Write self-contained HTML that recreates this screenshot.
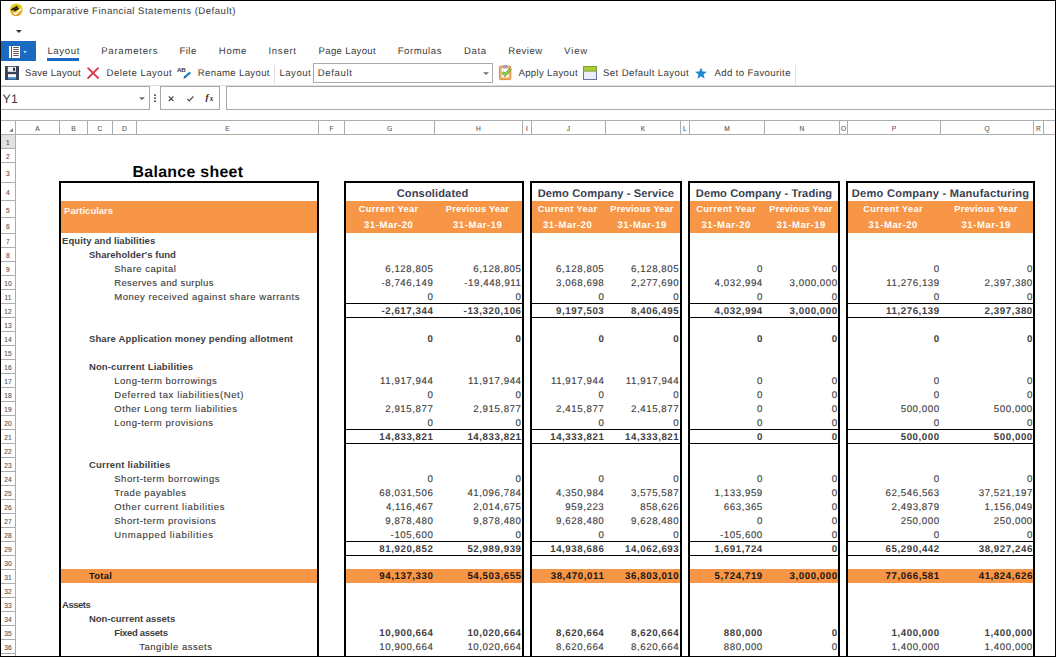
<!DOCTYPE html>
<html><head><meta charset="utf-8"><title>Comparative Financial Statements (Default)</title>
<style>
html,body{margin:0;padding:0}
body{width:1056px;height:657px;position:relative;overflow:hidden;background:#fff;font-family:"Liberation Sans", sans-serif}
.t{position:absolute;white-space:pre;line-height:14px;height:14px}
svg{position:absolute;overflow:visible}
</style></head>
<body>
<div style="position:absolute;left:0px;top:0px;width:1056px;height:1px;background:#000;"></div>
<div style="position:absolute;left:0px;top:0px;width:1px;height:657px;background:#000;"></div>
<div style="position:absolute;left:1055px;top:0px;width:1px;height:657px;background:#000;"></div>
<div style="position:absolute;left:0px;top:656px;width:1056px;height:1px;background:#000;"></div>
<div style="position:absolute;left:1px;top:41px;width:35px;height:20px;background:#1a6bbf;"></div>
<div style="position:absolute;left:47px;top:58px;width:32px;height:3px;background:#1a6bbf;"></div>
<div style="position:absolute;left:274px;top:65px;width:1px;height:20px;background:#e2e2e2;"></div>
<div style="position:absolute;left:795px;top:65px;width:1px;height:20px;background:#e2e2e2;"></div>
<div style="position:absolute;left:313px;top:63px;width:180px;height:20px;background:#fff;box-sizing:border-box;border:1px solid #ababab"></div>
<div style="position:absolute;left:1px;top:85px;width:1054px;height:1px;background:#dedede;"></div>
<div style="position:absolute;left:1px;top:86px;width:149px;height:1px;background:#a8a8a8;"></div>
<div style="position:absolute;left:1px;top:109px;width:149px;height:1px;background:#a8a8a8;"></div>
<div style="position:absolute;left:149px;top:86px;width:1px;height:24px;background:#a8a8a8;"></div>
<div style="position:absolute;left:160px;top:86px;width:60px;height:1px;background:#a8a8a8;"></div>
<div style="position:absolute;left:160px;top:109px;width:60px;height:1px;background:#a8a8a8;"></div>
<div style="position:absolute;left:160px;top:86px;width:1px;height:24px;background:#a8a8a8;"></div>
<div style="position:absolute;left:219px;top:86px;width:1px;height:24px;background:#a8a8a8;"></div>
<div style="position:absolute;left:226px;top:86px;width:829px;height:1px;background:#a8a8a8;"></div>
<div style="position:absolute;left:226px;top:109px;width:829px;height:1px;background:#a8a8a8;"></div>
<div style="position:absolute;left:226px;top:86px;width:1px;height:24px;background:#a8a8a8;"></div>
<div style="position:absolute;left:1px;top:120px;width:1054px;height:1px;background:#adadad;"></div>
<div style="position:absolute;left:1px;top:134px;width:1054px;height:1px;background:#adadad;"></div>
<div style="position:absolute;left:15px;top:121px;width:1px;height:13px;background:#adadad;"></div>
<div style="position:absolute;left:59px;top:121px;width:1px;height:13px;background:#adadad;"></div>
<div style="position:absolute;left:87px;top:121px;width:1px;height:13px;background:#adadad;"></div>
<div style="position:absolute;left:112px;top:121px;width:1px;height:13px;background:#adadad;"></div>
<div style="position:absolute;left:136px;top:121px;width:1px;height:13px;background:#adadad;"></div>
<div style="position:absolute;left:318px;top:121px;width:1px;height:13px;background:#adadad;"></div>
<div style="position:absolute;left:344px;top:121px;width:1px;height:13px;background:#adadad;"></div>
<div style="position:absolute;left:434px;top:121px;width:1px;height:13px;background:#adadad;"></div>
<div style="position:absolute;left:522px;top:121px;width:1px;height:13px;background:#adadad;"></div>
<div style="position:absolute;left:531px;top:121px;width:1px;height:13px;background:#adadad;"></div>
<div style="position:absolute;left:605px;top:121px;width:1px;height:13px;background:#adadad;"></div>
<div style="position:absolute;left:680px;top:121px;width:1px;height:13px;background:#adadad;"></div>
<div style="position:absolute;left:689px;top:121px;width:1px;height:13px;background:#adadad;"></div>
<div style="position:absolute;left:764px;top:121px;width:1px;height:13px;background:#adadad;"></div>
<div style="position:absolute;left:839px;top:121px;width:1px;height:13px;background:#adadad;"></div>
<div style="position:absolute;left:847px;top:121px;width:1px;height:13px;background:#adadad;"></div>
<div style="position:absolute;left:940px;top:121px;width:1px;height:13px;background:#adadad;"></div>
<div style="position:absolute;left:1033px;top:121px;width:1px;height:13px;background:#adadad;"></div>
<div style="position:absolute;left:1043px;top:121px;width:1px;height:13px;background:#adadad;"></div>
<div style="position:absolute;left:15px;top:135px;width:1px;height:521px;background:#adadad;"></div>
<div style="position:absolute;left:1px;top:135px;width:14px;height:13px;background:#e2e2e2;"></div>
<div style="position:absolute;left:1px;top:148px;width:15px;height:1px;background:#adadad;"></div>
<div style="position:absolute;left:1px;top:162px;width:15px;height:1px;background:#adadad;"></div>
<div style="position:absolute;left:1px;top:182px;width:15px;height:1px;background:#adadad;"></div>
<div style="position:absolute;left:1px;top:200px;width:15px;height:1px;background:#adadad;"></div>
<div style="position:absolute;left:1px;top:217px;width:15px;height:1px;background:#adadad;"></div>
<div style="position:absolute;left:1px;top:233px;width:15px;height:1px;background:#adadad;"></div>
<div style="position:absolute;left:1px;top:247px;width:15px;height:1px;background:#adadad;"></div>
<div style="position:absolute;left:1px;top:261px;width:15px;height:1px;background:#adadad;"></div>
<div style="position:absolute;left:1px;top:275px;width:15px;height:1px;background:#adadad;"></div>
<div style="position:absolute;left:1px;top:289px;width:15px;height:1px;background:#adadad;"></div>
<div style="position:absolute;left:1px;top:303px;width:15px;height:1px;background:#adadad;"></div>
<div style="position:absolute;left:1px;top:317px;width:15px;height:1px;background:#adadad;"></div>
<div style="position:absolute;left:1px;top:331px;width:15px;height:1px;background:#adadad;"></div>
<div style="position:absolute;left:1px;top:345px;width:15px;height:1px;background:#adadad;"></div>
<div style="position:absolute;left:1px;top:359px;width:15px;height:1px;background:#adadad;"></div>
<div style="position:absolute;left:1px;top:373px;width:15px;height:1px;background:#adadad;"></div>
<div style="position:absolute;left:1px;top:387px;width:15px;height:1px;background:#adadad;"></div>
<div style="position:absolute;left:1px;top:401px;width:15px;height:1px;background:#adadad;"></div>
<div style="position:absolute;left:1px;top:415px;width:15px;height:1px;background:#adadad;"></div>
<div style="position:absolute;left:1px;top:429px;width:15px;height:1px;background:#adadad;"></div>
<div style="position:absolute;left:1px;top:443px;width:15px;height:1px;background:#adadad;"></div>
<div style="position:absolute;left:1px;top:457px;width:15px;height:1px;background:#adadad;"></div>
<div style="position:absolute;left:1px;top:471px;width:15px;height:1px;background:#adadad;"></div>
<div style="position:absolute;left:1px;top:485px;width:15px;height:1px;background:#adadad;"></div>
<div style="position:absolute;left:1px;top:499px;width:15px;height:1px;background:#adadad;"></div>
<div style="position:absolute;left:1px;top:513px;width:15px;height:1px;background:#adadad;"></div>
<div style="position:absolute;left:1px;top:527px;width:15px;height:1px;background:#adadad;"></div>
<div style="position:absolute;left:1px;top:541px;width:15px;height:1px;background:#adadad;"></div>
<div style="position:absolute;left:1px;top:555px;width:15px;height:1px;background:#adadad;"></div>
<div style="position:absolute;left:1px;top:569px;width:15px;height:1px;background:#adadad;"></div>
<div style="position:absolute;left:1px;top:583px;width:15px;height:1px;background:#adadad;"></div>
<div style="position:absolute;left:1px;top:597px;width:15px;height:1px;background:#adadad;"></div>
<div style="position:absolute;left:1px;top:611px;width:15px;height:1px;background:#adadad;"></div>
<div style="position:absolute;left:1px;top:625px;width:15px;height:1px;background:#adadad;"></div>
<div style="position:absolute;left:1px;top:639px;width:15px;height:1px;background:#adadad;"></div>
<div style="position:absolute;left:1px;top:653px;width:15px;height:1px;background:#adadad;"></div>
<div style="position:absolute;left:61px;top:201px;width:256px;height:32px;background:#f79646;"></div>
<div style="position:absolute;left:61px;top:569px;width:256px;height:14px;background:#f79646;"></div>
<div style="position:absolute;left:346px;top:201px;width:176px;height:32px;background:#f79646;"></div>
<div style="position:absolute;left:346px;top:569px;width:176px;height:14px;background:#f79646;"></div>
<div style="position:absolute;left:532px;top:201px;width:148px;height:32px;background:#f79646;"></div>
<div style="position:absolute;left:532px;top:569px;width:148px;height:14px;background:#f79646;"></div>
<div style="position:absolute;left:690px;top:201px;width:148px;height:32px;background:#f79646;"></div>
<div style="position:absolute;left:690px;top:569px;width:148px;height:14px;background:#f79646;"></div>
<div style="position:absolute;left:848px;top:201px;width:185px;height:32px;background:#f79646;"></div>
<div style="position:absolute;left:848px;top:569px;width:185px;height:14px;background:#f79646;"></div>
<div style="position:absolute;left:346px;top:303px;width:176px;height:1px;background:#000;"></div>
<div style="position:absolute;left:346px;top:317px;width:176px;height:1px;background:#000;"></div>
<div style="position:absolute;left:346px;top:429px;width:176px;height:1px;background:#000;"></div>
<div style="position:absolute;left:346px;top:443px;width:176px;height:1px;background:#000;"></div>
<div style="position:absolute;left:346px;top:541px;width:176px;height:1px;background:#000;"></div>
<div style="position:absolute;left:346px;top:555px;width:176px;height:1px;background:#000;"></div>
<div style="position:absolute;left:532px;top:303px;width:148px;height:1px;background:#000;"></div>
<div style="position:absolute;left:532px;top:317px;width:148px;height:1px;background:#000;"></div>
<div style="position:absolute;left:532px;top:429px;width:148px;height:1px;background:#000;"></div>
<div style="position:absolute;left:532px;top:443px;width:148px;height:1px;background:#000;"></div>
<div style="position:absolute;left:532px;top:541px;width:148px;height:1px;background:#000;"></div>
<div style="position:absolute;left:532px;top:555px;width:148px;height:1px;background:#000;"></div>
<div style="position:absolute;left:690px;top:303px;width:148px;height:1px;background:#000;"></div>
<div style="position:absolute;left:690px;top:317px;width:148px;height:1px;background:#000;"></div>
<div style="position:absolute;left:690px;top:429px;width:148px;height:1px;background:#000;"></div>
<div style="position:absolute;left:690px;top:443px;width:148px;height:1px;background:#000;"></div>
<div style="position:absolute;left:690px;top:541px;width:148px;height:1px;background:#000;"></div>
<div style="position:absolute;left:690px;top:555px;width:148px;height:1px;background:#000;"></div>
<div style="position:absolute;left:848px;top:303px;width:185px;height:1px;background:#000;"></div>
<div style="position:absolute;left:848px;top:317px;width:185px;height:1px;background:#000;"></div>
<div style="position:absolute;left:848px;top:429px;width:185px;height:1px;background:#000;"></div>
<div style="position:absolute;left:848px;top:443px;width:185px;height:1px;background:#000;"></div>
<div style="position:absolute;left:848px;top:541px;width:185px;height:1px;background:#000;"></div>
<div style="position:absolute;left:848px;top:555px;width:185px;height:1px;background:#000;"></div>
<div style="position:absolute;left:59px;top:181px;width:260px;height:2px;background:#000;"></div>
<div style="position:absolute;left:59px;top:181px;width:2px;height:475px;background:#000;"></div>
<div style="position:absolute;left:317px;top:181px;width:2px;height:475px;background:#000;"></div>
<div style="position:absolute;left:344px;top:181px;width:180px;height:2px;background:#000;"></div>
<div style="position:absolute;left:344px;top:181px;width:2px;height:475px;background:#000;"></div>
<div style="position:absolute;left:522px;top:181px;width:2px;height:475px;background:#000;"></div>
<div style="position:absolute;left:530px;top:181px;width:152px;height:2px;background:#000;"></div>
<div style="position:absolute;left:530px;top:181px;width:2px;height:475px;background:#000;"></div>
<div style="position:absolute;left:680px;top:181px;width:2px;height:475px;background:#000;"></div>
<div style="position:absolute;left:688px;top:181px;width:152px;height:2px;background:#000;"></div>
<div style="position:absolute;left:688px;top:181px;width:2px;height:475px;background:#000;"></div>
<div style="position:absolute;left:838px;top:181px;width:2px;height:475px;background:#000;"></div>
<div style="position:absolute;left:846px;top:181px;width:189px;height:2px;background:#000;"></div>
<div style="position:absolute;left:846px;top:181px;width:2px;height:475px;background:#000;"></div>
<div style="position:absolute;left:1033px;top:181px;width:2px;height:475px;background:#000;"></div>
<svg width="1056" height="657" viewBox="0 0 1056 657" style="left:0;top:0">
<defs>
<linearGradient id="gy" x1="0" y1="0" x2="0" y2="1"><stop offset="0" stop-color="#d6d321"/><stop offset="0.55" stop-color="#e9c41c"/><stop offset="1" stop-color="#e39a22"/></linearGradient>
<linearGradient id="gb" x1="0" y1="0" x2="0" y2="1"><stop offset="0" stop-color="#ffffff"/><stop offset="0.45" stop-color="#eef4fb"/><stop offset="0.55" stop-color="#5b9bd8"/><stop offset="1" stop-color="#3f86cc"/></linearGradient>
</defs>
<!-- app icon -->
<circle cx="16.3" cy="9.8" r="6.4" fill="url(#gy)"/>
<path d="M17.6 6.6 L11.4 10.0 M18.6 8.2 L14.0 10.8" stroke="#1e1000" stroke-width="1.7" fill="none"/>
<path d="M13.6 12.6 L15.6 14.2 L21 9.0" stroke="#fff" stroke-width="1.5" fill="none"/>
<!-- quick access arrow -->
<path d="M15.9 30 L21.9 30 L18.9 33 Z" fill="#333"/>
<!-- app button glyph -->
<rect x="9" y="46" width="2" height="12" fill="#fff"/>
<rect x="12" y="46" width="8" height="12" fill="#fff"/>
<path d="M13.2 47.5H18.8M13.2 49.5H18.8M13.2 51.5H18.8M13.2 53.5H18.8M13.2 55.5H18.8" stroke="#6d5a48" stroke-width="1"/>
<path d="M23.4 51 L26.6 51 L25 53.2 Z" fill="#dfeefc"/>
<!-- save -->
<rect x="5" y="66" width="14" height="14" fill="#3a4257"/>
<rect x="7.8" y="66.8" width="8.2" height="5" fill="#f4f6fa"/>
<rect x="13" y="67.8" width="2.1" height="3" fill="#262d3d"/>
<rect x="8" y="74.2" width="8" height="5.2" fill="url(#gb)"/>
<!-- delete X -->
<path d="M88.1 68.2 L98.1 78 M98.1 68.2 L88.1 78" stroke="#e0354f" stroke-width="1.8" stroke-linecap="round" fill="none"/>
<!-- rename -->
<text x="176.9" y="72.2" font-family="Liberation Sans, sans-serif" font-size="6.2" font-weight="700" fill="#333">AB</text>
<path d="M190.3 72.3 L184.6 77.3" stroke="#2a86c0" stroke-width="2.4" fill="none"/>
<path d="M184.9 76 L185.9 77.9 L183.1 78.7 Z" fill="#2c5f88"/>
<!-- combobox arrow -->
<path d="M483.1 72.2 L489 72.2 L486.05 75 Z" fill="#6e6e6e"/>
<!-- apply (clipboard) -->
<rect x="499.4" y="66.2" width="11.4" height="13.4" rx="1" fill="#f0b46a" stroke="#d98a3a" stroke-width="1"/>
<rect x="501.8" y="68.4" width="6.8" height="8.8" fill="#fff"/>
<rect x="502.7" y="65" width="4.8" height="3.3" rx="0.8" fill="#9aa1c4"/>
<path d="M502.6 72.1 L505.1 75 L510.6 68.9" stroke="#4f8f1e" stroke-width="2.7" fill="none"/>
<path d="M502.6 72.1 L505.1 75 L510.6 68.9" stroke="#a4dd55" stroke-width="1.3" fill="none"/>
<!-- set default -->
<rect x="583.5" y="66.5" width="13" height="13" fill="#eaeefa" stroke="#6a73a8" stroke-width="1"/>
<rect x="583.5" y="66.5" width="13" height="4.6" fill="#a9cd3e" stroke="#7f9f2c" stroke-width="1"/>
<!-- star -->
<path d="M701 67.5 L702.6 71.6 L706.9 71.8 L703.5 74.5 L704.7 78.7 L701 76.3 L697.3 78.7 L698.5 74.5 L695.1 71.8 L699.4 71.6 Z" fill="#1f86d0"/>
<!-- name box arrow, dots -->
<path d="M139.1 97.3 L144.9 97.3 L142 100.2 Z" fill="#6e6e6e"/>
<rect x="154" y="94.4" width="2" height="1.5" fill="#555"/><rect x="154" y="97.4" width="2" height="1.5" fill="#555"/><rect x="154" y="100.4" width="2" height="1.5" fill="#555"/>
<!-- cancel / enter / fx -->
<path d="M168.8 96.4 L173.4 101 M173.4 96.4 L168.8 101" stroke="#444" stroke-width="1.1" fill="none"/>
<path d="M187.4 98.9 L189.3 100.9 L193.4 96.3" stroke="#444" stroke-width="1.2" fill="none"/>
<text x="205.6" y="99.9" font-family="Liberation Serif, serif" font-size="9.2" font-style="italic" font-weight="700" fill="#222">f</text>
<text x="209.7" y="101.2" font-family="Liberation Serif, serif" font-size="7.2" font-style="italic" font-weight="700" fill="#222">x</text>
<!-- select all -->
<path d="M13 127.9 L13 131.8 L9.2 131.8 Z" fill="#777"/>
</svg>

<div class="t" style="left:29.2px;top:5px;font-size:9.6px;color:#3b3b3b;text-rendering:geometricPrecision;letter-spacing:0.49px;">Comparative Financial Statements (Default)</div>
<div class="t" style="left:47.4px;top:45px;font-size:9.6px;color:#3b3b3b;text-rendering:geometricPrecision;letter-spacing:0.63px;">Layout</div>
<div class="t" style="left:101.2px;top:45px;font-size:9.6px;color:#3b3b3b;text-rendering:geometricPrecision;letter-spacing:0.74px;">Parameters</div>
<div class="t" style="left:179.4px;top:45px;font-size:9.6px;color:#3b3b3b;text-rendering:geometricPrecision;letter-spacing:0.46px;">File</div>
<div class="t" style="left:218.8px;top:45px;font-size:9.6px;color:#3b3b3b;text-rendering:geometricPrecision;letter-spacing:0.69px;">Home</div>
<div class="t" style="left:268.4px;top:45px;font-size:9.6px;color:#3b3b3b;text-rendering:geometricPrecision;letter-spacing:0.73px;">Insert</div>
<div class="t" style="left:318.6px;top:45px;font-size:9.6px;color:#3b3b3b;text-rendering:geometricPrecision;letter-spacing:0.32px;">Page Layout</div>
<div class="t" style="left:397.7px;top:45px;font-size:9.6px;color:#3b3b3b;text-rendering:geometricPrecision;letter-spacing:0.54px;">Formulas</div>
<div class="t" style="left:463.9px;top:45px;font-size:9.6px;color:#3b3b3b;text-rendering:geometricPrecision;letter-spacing:0.66px;">Data</div>
<div class="t" style="left:508.3px;top:45px;font-size:9.6px;color:#3b3b3b;text-rendering:geometricPrecision;letter-spacing:0.48px;">Review</div>
<div class="t" style="left:564.1px;top:45px;font-size:9.6px;color:#3b3b3b;text-rendering:geometricPrecision;letter-spacing:0.84px;">View</div>
<div class="t" style="left:25.0px;top:67px;font-size:9.6px;color:#3b3b3b;text-rendering:geometricPrecision;letter-spacing:0.24px;">Save Layout</div>
<div class="t" style="left:106.5px;top:67px;font-size:9.6px;color:#3b3b3b;text-rendering:geometricPrecision;letter-spacing:0.5px;">Delete Layout</div>
<div class="t" style="left:197.8px;top:67px;font-size:9.6px;color:#3b3b3b;text-rendering:geometricPrecision;letter-spacing:0.33px;">Rename Layout</div>
<div class="t" style="left:279.5px;top:67px;font-size:9.6px;color:#3b3b3b;text-rendering:geometricPrecision;letter-spacing:0.47px;">Layout</div>
<div class="t" style="left:317.7px;top:67px;font-size:9.6px;color:#3b3b3b;text-rendering:geometricPrecision;letter-spacing:0.64px;">Default</div>
<div class="t" style="left:518.4px;top:67px;font-size:9.6px;color:#3b3b3b;text-rendering:geometricPrecision;letter-spacing:0.34px;">Apply Layout</div>
<div class="t" style="left:603.0px;top:67px;font-size:9.6px;color:#3b3b3b;text-rendering:geometricPrecision;letter-spacing:0.39px;">Set Default Layout</div>
<div class="t" style="left:714.4px;top:67px;font-size:9.6px;color:#3b3b3b;text-rendering:geometricPrecision;letter-spacing:0.38px;">Add to Favourite</div>
<div class="t" style="left:2.5px;top:92px;font-size:12.3px;color:#3a3a3a;text-rendering:geometricPrecision;letter-spacing:0.23px;">Y1</div>
<div class="t" style="left:35.2px;top:122px;font-size:6.6px;color:#585858;-webkit-text-stroke:0.12px;">A</div>
<div class="t" style="left:71.2px;top:122px;font-size:6.6px;color:#585858;-webkit-text-stroke:0.12px;">B</div>
<div class="t" style="left:97.6px;top:122px;font-size:6.6px;color:#585858;-webkit-text-stroke:0.12px;">C</div>
<div class="t" style="left:122.1px;top:122px;font-size:6.6px;color:#585858;-webkit-text-stroke:0.12px;">D</div>
<div class="t" style="left:225.2px;top:122px;font-size:6.6px;color:#585858;-webkit-text-stroke:0.12px;">E</div>
<div class="t" style="left:329.4px;top:122px;font-size:6.6px;color:#585858;-webkit-text-stroke:0.12px;">F</div>
<div class="t" style="left:386.9px;top:122px;font-size:6.6px;color:#585858;-webkit-text-stroke:0.12px;">G</div>
<div class="t" style="left:476.1px;top:122px;font-size:6.6px;color:#585858;-webkit-text-stroke:0.12px;">H</div>
<div class="t" style="left:526.0px;top:122px;font-size:6.6px;color:#585858;-webkit-text-stroke:0.12px;">I</div>
<div class="t" style="left:566.8px;top:122px;font-size:6.6px;color:#585858;-webkit-text-stroke:0.12px;">J</div>
<div class="t" style="left:640.7px;top:122px;font-size:6.6px;color:#585858;-webkit-text-stroke:0.12px;">K</div>
<div class="t" style="left:683.1px;top:122px;font-size:6.6px;color:#585858;-webkit-text-stroke:0.12px;">L</div>
<div class="t" style="left:724.2px;top:122px;font-size:6.6px;color:#585858;-webkit-text-stroke:0.12px;">M</div>
<div class="t" style="left:799.6px;top:122px;font-size:6.6px;color:#585858;-webkit-text-stroke:0.12px;">N</div>
<div class="t" style="left:840.9px;top:122px;font-size:6.6px;color:#585858;-webkit-text-stroke:0.12px;">O</div>
<div class="t" style="left:891.7px;top:122px;font-size:6.6px;color:#585858;-webkit-text-stroke:0.12px;">P</div>
<div class="t" style="left:984.4px;top:122px;font-size:6.6px;color:#585858;-webkit-text-stroke:0.12px;">Q</div>
<div class="t" style="left:1036.1px;top:122px;font-size:6.6px;color:#585858;-webkit-text-stroke:0.12px;">R</div>
<div class="t" style="left:6.1px;top:136px;font-size:6.6px;color:#585858;-webkit-text-stroke:0.12px;">1</div>
<div class="t" style="left:6.1px;top:150px;font-size:6.6px;color:#585858;-webkit-text-stroke:0.12px;">2</div>
<div class="t" style="left:6.1px;top:167px;font-size:6.6px;color:#585858;-webkit-text-stroke:0.12px;">3</div>
<div class="t" style="left:6.1px;top:186px;font-size:6.6px;color:#585858;-webkit-text-stroke:0.12px;">4</div>
<div class="t" style="left:6.1px;top:204px;font-size:6.6px;color:#585858;-webkit-text-stroke:0.12px;">5</div>
<div class="t" style="left:6.1px;top:220px;font-size:6.6px;color:#585858;-webkit-text-stroke:0.12px;">6</div>
<div class="t" style="left:6.1px;top:235px;font-size:6.6px;color:#585858;-webkit-text-stroke:0.12px;">7</div>
<div class="t" style="left:6.1px;top:249px;font-size:6.6px;color:#585858;-webkit-text-stroke:0.12px;">8</div>
<div class="t" style="left:6.1px;top:263px;font-size:6.6px;color:#585858;-webkit-text-stroke:0.12px;">9</div>
<div class="t" style="left:4.3px;top:277px;font-size:6.6px;color:#585858;-webkit-text-stroke:0.12px;">10</div>
<div class="t" style="left:4.5px;top:291px;font-size:6.6px;color:#585858;-webkit-text-stroke:0.12px;">11</div>
<div class="t" style="left:4.3px;top:305px;font-size:6.6px;color:#585858;-webkit-text-stroke:0.12px;">12</div>
<div class="t" style="left:4.3px;top:319px;font-size:6.6px;color:#585858;-webkit-text-stroke:0.12px;">13</div>
<div class="t" style="left:4.3px;top:333px;font-size:6.6px;color:#585858;-webkit-text-stroke:0.12px;">14</div>
<div class="t" style="left:4.3px;top:347px;font-size:6.6px;color:#585858;-webkit-text-stroke:0.12px;">15</div>
<div class="t" style="left:4.3px;top:361px;font-size:6.6px;color:#585858;-webkit-text-stroke:0.12px;">16</div>
<div class="t" style="left:4.3px;top:375px;font-size:6.6px;color:#585858;-webkit-text-stroke:0.12px;">17</div>
<div class="t" style="left:4.3px;top:389px;font-size:6.6px;color:#585858;-webkit-text-stroke:0.12px;">18</div>
<div class="t" style="left:4.3px;top:403px;font-size:6.6px;color:#585858;-webkit-text-stroke:0.12px;">19</div>
<div class="t" style="left:4.3px;top:417px;font-size:6.6px;color:#585858;-webkit-text-stroke:0.12px;">20</div>
<div class="t" style="left:4.3px;top:431px;font-size:6.6px;color:#585858;-webkit-text-stroke:0.12px;">21</div>
<div class="t" style="left:4.3px;top:445px;font-size:6.6px;color:#585858;-webkit-text-stroke:0.12px;">22</div>
<div class="t" style="left:4.3px;top:459px;font-size:6.6px;color:#585858;-webkit-text-stroke:0.12px;">23</div>
<div class="t" style="left:4.3px;top:473px;font-size:6.6px;color:#585858;-webkit-text-stroke:0.12px;">24</div>
<div class="t" style="left:4.3px;top:487px;font-size:6.6px;color:#585858;-webkit-text-stroke:0.12px;">25</div>
<div class="t" style="left:4.3px;top:501px;font-size:6.6px;color:#585858;-webkit-text-stroke:0.12px;">26</div>
<div class="t" style="left:4.3px;top:515px;font-size:6.6px;color:#585858;-webkit-text-stroke:0.12px;">27</div>
<div class="t" style="left:4.3px;top:529px;font-size:6.6px;color:#585858;-webkit-text-stroke:0.12px;">28</div>
<div class="t" style="left:4.3px;top:543px;font-size:6.6px;color:#585858;-webkit-text-stroke:0.12px;">29</div>
<div class="t" style="left:4.3px;top:557px;font-size:6.6px;color:#585858;-webkit-text-stroke:0.12px;">30</div>
<div class="t" style="left:4.3px;top:571px;font-size:6.6px;color:#585858;-webkit-text-stroke:0.12px;">31</div>
<div class="t" style="left:4.3px;top:585px;font-size:6.6px;color:#585858;-webkit-text-stroke:0.12px;">32</div>
<div class="t" style="left:4.3px;top:599px;font-size:6.6px;color:#585858;-webkit-text-stroke:0.12px;">33</div>
<div class="t" style="left:4.3px;top:613px;font-size:6.6px;color:#585858;-webkit-text-stroke:0.12px;">34</div>
<div class="t" style="left:4.3px;top:627px;font-size:6.6px;color:#585858;-webkit-text-stroke:0.12px;">35</div>
<div class="t" style="left:4.3px;top:641px;font-size:6.6px;color:#585858;-webkit-text-stroke:0.12px;">36</div>
<div class="t" style="left:132.6px;top:166px;font-size:15.9px;color:#050505;text-rendering:geometricPrecision;font-weight:700;letter-spacing:0.29px;">Balance sheet</div>
<div class="t" style="left:396.7px;top:187px;font-size:11.1px;color:#394052;text-rendering:geometricPrecision;font-weight:700;letter-spacing:0.12px;">Consolidated</div>
<div class="t" style="left:537.7px;top:187px;font-size:11.1px;color:#394052;text-rendering:geometricPrecision;font-weight:700;letter-spacing:0.12px;">Demo Company - Service</div>
<div class="t" style="left:695.8px;top:187px;font-size:11.1px;color:#394052;text-rendering:geometricPrecision;font-weight:700;letter-spacing:0.09px;">Demo Company - Trading</div>
<div class="t" style="left:851.8px;top:187px;font-size:11.1px;color:#394052;text-rendering:geometricPrecision;font-weight:700;letter-spacing:0.24px;">Demo Company - Manufacturing</div>
<div class="t" style="left:64.1px;top:204px;font-size:9.5px;color:#fff8ee;font-weight:700;letter-spacing:-0.02px;">Particulars</div>
<div class="t" style="left:358.8px;top:202px;font-size:9.2px;color:#fff;font-weight:700;letter-spacing:0.39px;">Current Year</div>
<div class="t" style="left:445.8px;top:202px;font-size:9.2px;color:#fff;font-weight:700;letter-spacing:0.21px;">Previous Year</div>
<div class="t" style="left:364.0px;top:219px;font-size:9.5px;color:#fff;text-rendering:geometricPrecision;font-weight:700;letter-spacing:0.56px;">31-Mar-20</div>
<div class="t" style="left:453.0px;top:219px;font-size:9.5px;color:#fff;text-rendering:geometricPrecision;font-weight:700;letter-spacing:0.56px;">31-Mar-19</div>
<div class="t" style="left:537.8px;top:202px;font-size:9.2px;color:#fff;font-weight:700;letter-spacing:0.39px;">Current Year</div>
<div class="t" style="left:610.3px;top:202px;font-size:9.2px;color:#fff;font-weight:700;letter-spacing:0.21px;">Previous Year</div>
<div class="t" style="left:543.0px;top:219px;font-size:9.5px;color:#fff;text-rendering:geometricPrecision;font-weight:700;letter-spacing:0.56px;">31-Mar-20</div>
<div class="t" style="left:617.5px;top:219px;font-size:9.5px;color:#fff;text-rendering:geometricPrecision;font-weight:700;letter-spacing:0.56px;">31-Mar-19</div>
<div class="t" style="left:696.3px;top:202px;font-size:9.2px;color:#fff;font-weight:700;letter-spacing:0.39px;">Current Year</div>
<div class="t" style="left:769.3px;top:202px;font-size:9.2px;color:#fff;font-weight:700;letter-spacing:0.21px;">Previous Year</div>
<div class="t" style="left:701.5px;top:219px;font-size:9.5px;color:#fff;text-rendering:geometricPrecision;font-weight:700;letter-spacing:0.56px;">31-Mar-20</div>
<div class="t" style="left:776.5px;top:219px;font-size:9.5px;color:#fff;text-rendering:geometricPrecision;font-weight:700;letter-spacing:0.56px;">31-Mar-19</div>
<div class="t" style="left:863.3px;top:202px;font-size:9.2px;color:#fff;font-weight:700;letter-spacing:0.39px;">Current Year</div>
<div class="t" style="left:954.3px;top:202px;font-size:9.2px;color:#fff;font-weight:700;letter-spacing:0.21px;">Previous Year</div>
<div class="t" style="left:868.5px;top:219px;font-size:9.5px;color:#fff;text-rendering:geometricPrecision;font-weight:700;letter-spacing:0.56px;">31-Mar-20</div>
<div class="t" style="left:961.5px;top:219px;font-size:9.5px;color:#fff;text-rendering:geometricPrecision;font-weight:700;letter-spacing:0.56px;">31-Mar-19</div>
<div class="t" style="left:62.1px;top:234px;font-size:9.5px;color:#3e3e42;font-weight:700;letter-spacing:0.06px;">Equity and liabilities</div>
<div class="t" style="left:88.9px;top:248px;font-size:9.5px;color:#3e3e42;font-weight:700;letter-spacing:0.05px;">Shareholder&#x27;s fund</div>
<div class="t" style="left:114.2px;top:262px;font-size:9.5px;color:#3c3c3c;-webkit-text-stroke:0.12px;letter-spacing:0.52px;">Share capital</div>
<div class="t" style="left:114.2px;top:276px;font-size:9.5px;color:#3c3c3c;-webkit-text-stroke:0.12px;letter-spacing:0.39px;">Reserves and surplus</div>
<div class="t" style="left:114.2px;top:290px;font-size:9.5px;color:#3c3c3c;-webkit-text-stroke:0.12px;letter-spacing:0.54px;">Money received against share warrants</div>
<div class="t" style="left:88.9px;top:332px;font-size:9.5px;color:#3e3e42;font-weight:700;letter-spacing:0.15px;">Share Application money pending allotment</div>
<div class="t" style="left:88.9px;top:360px;font-size:9.5px;color:#3e3e42;font-weight:700;letter-spacing:0.15px;">Non-current Liabilities</div>
<div class="t" style="left:114.2px;top:374px;font-size:9.5px;color:#3c3c3c;-webkit-text-stroke:0.12px;letter-spacing:0.54px;">Long-term borrowings</div>
<div class="t" style="left:114.2px;top:388px;font-size:9.5px;color:#3c3c3c;-webkit-text-stroke:0.12px;letter-spacing:0.62px;">Deferred tax liabilities(Net)</div>
<div class="t" style="left:114.2px;top:402px;font-size:9.5px;color:#3c3c3c;-webkit-text-stroke:0.12px;letter-spacing:0.58px;">Other Long term liabilities</div>
<div class="t" style="left:114.2px;top:416px;font-size:9.5px;color:#3c3c3c;-webkit-text-stroke:0.12px;letter-spacing:0.53px;">Long-term provisions</div>
<div class="t" style="left:88.9px;top:458px;font-size:9.5px;color:#3e3e42;font-weight:700;letter-spacing:0.21px;">Current liabilities</div>
<div class="t" style="left:114.2px;top:472px;font-size:9.5px;color:#3c3c3c;-webkit-text-stroke:0.12px;letter-spacing:0.57px;">Short-term borrowings</div>
<div class="t" style="left:114.2px;top:486px;font-size:9.5px;color:#3c3c3c;-webkit-text-stroke:0.12px;letter-spacing:0.51px;">Trade payables</div>
<div class="t" style="left:114.2px;top:500px;font-size:9.5px;color:#3c3c3c;-webkit-text-stroke:0.12px;letter-spacing:0.66px;">Other current liabilities</div>
<div class="t" style="left:114.2px;top:514px;font-size:9.5px;color:#3c3c3c;-webkit-text-stroke:0.12px;letter-spacing:0.57px;">Short-term provisions</div>
<div class="t" style="left:114.2px;top:528px;font-size:9.5px;color:#3c3c3c;-webkit-text-stroke:0.12px;letter-spacing:0.72px;">Unmapped liabilities</div>
<div class="t" style="left:88.9px;top:569px;font-size:9.5px;color:#1c1410;font-weight:700;letter-spacing:0.26px;">Total</div>
<div class="t" style="left:62.1px;top:598px;font-size:9.5px;color:#3e3e42;font-weight:700;letter-spacing:-0.49px;">Assets</div>
<div class="t" style="left:88.9px;top:612px;font-size:9.5px;color:#3e3e42;font-weight:700;letter-spacing:-0.01px;">Non-current assets</div>
<div class="t" style="left:114.2px;top:626px;font-size:9.5px;color:#3e3e42;font-weight:700;letter-spacing:-0.3px;">Fixed assets</div>
<div class="t" style="left:139.2px;top:640px;font-size:9.5px;color:#3c3c3c;-webkit-text-stroke:0.12px;letter-spacing:0.52px;">Tangible assets</div>
<div class="t" style="left:385.2px;top:263px;font-size:9.7px;color:#3c3c3c;text-rendering:geometricPrecision;-webkit-text-stroke:0.12px;letter-spacing:0.57px;">6,128,805</div>
<div class="t" style="left:473.3px;top:263px;font-size:9.7px;color:#3c3c3c;text-rendering:geometricPrecision;-webkit-text-stroke:0.12px;letter-spacing:0.57px;">6,128,805</div>
<div class="t" style="left:556.1px;top:263px;font-size:9.7px;color:#3c3c3c;text-rendering:geometricPrecision;-webkit-text-stroke:0.12px;letter-spacing:0.57px;">6,128,805</div>
<div class="t" style="left:631.0px;top:263px;font-size:9.7px;color:#3c3c3c;text-rendering:geometricPrecision;-webkit-text-stroke:0.12px;letter-spacing:0.57px;">6,128,805</div>
<div class="t" style="left:756.9px;top:263px;font-size:9.7px;color:#3c3c3c;text-rendering:geometricPrecision;-webkit-text-stroke:0.12px;letter-spacing:0.57px;">0</div>
<div class="t" style="left:831.8px;top:263px;font-size:9.7px;color:#3c3c3c;text-rendering:geometricPrecision;-webkit-text-stroke:0.12px;letter-spacing:0.57px;">0</div>
<div class="t" style="left:933.8px;top:263px;font-size:9.7px;color:#3c3c3c;text-rendering:geometricPrecision;-webkit-text-stroke:0.12px;letter-spacing:0.57px;">0</div>
<div class="t" style="left:1026.9px;top:263px;font-size:9.7px;color:#3c3c3c;text-rendering:geometricPrecision;-webkit-text-stroke:0.12px;letter-spacing:0.57px;">0</div>
<div class="t" style="left:381.4px;top:277px;font-size:9.7px;color:#3c3c3c;text-rendering:geometricPrecision;-webkit-text-stroke:0.12px;letter-spacing:0.57px;">-8,746,149</div>
<div class="t" style="left:464.3px;top:277px;font-size:9.7px;color:#3c3c3c;text-rendering:geometricPrecision;-webkit-text-stroke:0.12px;letter-spacing:0.57px;">-19,448,911</div>
<div class="t" style="left:556.1px;top:277px;font-size:9.7px;color:#3c3c3c;text-rendering:geometricPrecision;-webkit-text-stroke:0.12px;letter-spacing:0.57px;">3,068,698</div>
<div class="t" style="left:631.0px;top:277px;font-size:9.7px;color:#3c3c3c;text-rendering:geometricPrecision;-webkit-text-stroke:0.12px;letter-spacing:0.57px;">2,277,690</div>
<div class="t" style="left:714.6px;top:277px;font-size:9.7px;color:#3c3c3c;text-rendering:geometricPrecision;-webkit-text-stroke:0.12px;letter-spacing:0.57px;">4,032,994</div>
<div class="t" style="left:789.5px;top:277px;font-size:9.7px;color:#3c3c3c;text-rendering:geometricPrecision;-webkit-text-stroke:0.12px;letter-spacing:0.57px;">3,000,000</div>
<div class="t" style="left:886.3px;top:277px;font-size:9.7px;color:#3c3c3c;text-rendering:geometricPrecision;-webkit-text-stroke:0.12px;letter-spacing:0.57px;">11,276,139</div>
<div class="t" style="left:984.6px;top:277px;font-size:9.7px;color:#3c3c3c;text-rendering:geometricPrecision;-webkit-text-stroke:0.12px;letter-spacing:0.57px;">2,397,380</div>
<div class="t" style="left:427.5px;top:291px;font-size:9.7px;color:#3c3c3c;text-rendering:geometricPrecision;-webkit-text-stroke:0.12px;letter-spacing:0.57px;">0</div>
<div class="t" style="left:515.6px;top:291px;font-size:9.7px;color:#3c3c3c;text-rendering:geometricPrecision;-webkit-text-stroke:0.12px;letter-spacing:0.57px;">0</div>
<div class="t" style="left:598.4px;top:291px;font-size:9.7px;color:#3c3c3c;text-rendering:geometricPrecision;-webkit-text-stroke:0.12px;letter-spacing:0.57px;">0</div>
<div class="t" style="left:673.3px;top:291px;font-size:9.7px;color:#3c3c3c;text-rendering:geometricPrecision;-webkit-text-stroke:0.12px;letter-spacing:0.57px;">0</div>
<div class="t" style="left:756.9px;top:291px;font-size:9.7px;color:#3c3c3c;text-rendering:geometricPrecision;-webkit-text-stroke:0.12px;letter-spacing:0.57px;">0</div>
<div class="t" style="left:831.8px;top:291px;font-size:9.7px;color:#3c3c3c;text-rendering:geometricPrecision;-webkit-text-stroke:0.12px;letter-spacing:0.57px;">0</div>
<div class="t" style="left:933.8px;top:291px;font-size:9.7px;color:#3c3c3c;text-rendering:geometricPrecision;-webkit-text-stroke:0.12px;letter-spacing:0.57px;">0</div>
<div class="t" style="left:1026.9px;top:291px;font-size:9.7px;color:#3c3c3c;text-rendering:geometricPrecision;-webkit-text-stroke:0.12px;letter-spacing:0.57px;">0</div>
<div class="t" style="left:381.4px;top:305px;font-size:9.7px;color:#3e3e42;text-rendering:geometricPrecision;font-weight:700;letter-spacing:0.57px;">-2,617,344</div>
<div class="t" style="left:463.6px;top:305px;font-size:9.7px;color:#3e3e42;text-rendering:geometricPrecision;font-weight:700;letter-spacing:0.57px;">-13,320,106</div>
<div class="t" style="left:556.1px;top:305px;font-size:9.7px;color:#3e3e42;text-rendering:geometricPrecision;font-weight:700;letter-spacing:0.57px;">9,197,503</div>
<div class="t" style="left:631.0px;top:305px;font-size:9.7px;color:#3e3e42;text-rendering:geometricPrecision;font-weight:700;letter-spacing:0.57px;">8,406,495</div>
<div class="t" style="left:714.6px;top:305px;font-size:9.7px;color:#3e3e42;text-rendering:geometricPrecision;font-weight:700;letter-spacing:0.57px;">4,032,994</div>
<div class="t" style="left:789.5px;top:305px;font-size:9.7px;color:#3e3e42;text-rendering:geometricPrecision;font-weight:700;letter-spacing:0.57px;">3,000,000</div>
<div class="t" style="left:886.1px;top:305px;font-size:9.7px;color:#3e3e42;text-rendering:geometricPrecision;font-weight:700;letter-spacing:0.57px;">11,276,139</div>
<div class="t" style="left:984.6px;top:305px;font-size:9.7px;color:#3e3e42;text-rendering:geometricPrecision;font-weight:700;letter-spacing:0.57px;">2,397,380</div>
<div class="t" style="left:427.5px;top:333px;font-size:9.7px;color:#3e3e42;text-rendering:geometricPrecision;font-weight:700;letter-spacing:0.57px;">0</div>
<div class="t" style="left:515.6px;top:333px;font-size:9.7px;color:#3e3e42;text-rendering:geometricPrecision;font-weight:700;letter-spacing:0.57px;">0</div>
<div class="t" style="left:598.4px;top:333px;font-size:9.7px;color:#3e3e42;text-rendering:geometricPrecision;font-weight:700;letter-spacing:0.57px;">0</div>
<div class="t" style="left:673.3px;top:333px;font-size:9.7px;color:#3e3e42;text-rendering:geometricPrecision;font-weight:700;letter-spacing:0.57px;">0</div>
<div class="t" style="left:756.9px;top:333px;font-size:9.7px;color:#3e3e42;text-rendering:geometricPrecision;font-weight:700;letter-spacing:0.57px;">0</div>
<div class="t" style="left:831.8px;top:333px;font-size:9.7px;color:#3e3e42;text-rendering:geometricPrecision;font-weight:700;letter-spacing:0.57px;">0</div>
<div class="t" style="left:933.8px;top:333px;font-size:9.7px;color:#3e3e42;text-rendering:geometricPrecision;font-weight:700;letter-spacing:0.57px;">0</div>
<div class="t" style="left:1026.9px;top:333px;font-size:9.7px;color:#3e3e42;text-rendering:geometricPrecision;font-weight:700;letter-spacing:0.57px;">0</div>
<div class="t" style="left:380.0px;top:375px;font-size:9.7px;color:#3c3c3c;text-rendering:geometricPrecision;-webkit-text-stroke:0.12px;letter-spacing:0.57px;">11,917,944</div>
<div class="t" style="left:468.1px;top:375px;font-size:9.7px;color:#3c3c3c;text-rendering:geometricPrecision;-webkit-text-stroke:0.12px;letter-spacing:0.57px;">11,917,944</div>
<div class="t" style="left:550.9px;top:375px;font-size:9.7px;color:#3c3c3c;text-rendering:geometricPrecision;-webkit-text-stroke:0.12px;letter-spacing:0.57px;">11,917,944</div>
<div class="t" style="left:625.8px;top:375px;font-size:9.7px;color:#3c3c3c;text-rendering:geometricPrecision;-webkit-text-stroke:0.12px;letter-spacing:0.57px;">11,917,944</div>
<div class="t" style="left:756.9px;top:375px;font-size:9.7px;color:#3c3c3c;text-rendering:geometricPrecision;-webkit-text-stroke:0.12px;letter-spacing:0.57px;">0</div>
<div class="t" style="left:831.8px;top:375px;font-size:9.7px;color:#3c3c3c;text-rendering:geometricPrecision;-webkit-text-stroke:0.12px;letter-spacing:0.57px;">0</div>
<div class="t" style="left:933.8px;top:375px;font-size:9.7px;color:#3c3c3c;text-rendering:geometricPrecision;-webkit-text-stroke:0.12px;letter-spacing:0.57px;">0</div>
<div class="t" style="left:1026.9px;top:375px;font-size:9.7px;color:#3c3c3c;text-rendering:geometricPrecision;-webkit-text-stroke:0.12px;letter-spacing:0.57px;">0</div>
<div class="t" style="left:427.5px;top:389px;font-size:9.7px;color:#3c3c3c;text-rendering:geometricPrecision;-webkit-text-stroke:0.12px;letter-spacing:0.57px;">0</div>
<div class="t" style="left:515.6px;top:389px;font-size:9.7px;color:#3c3c3c;text-rendering:geometricPrecision;-webkit-text-stroke:0.12px;letter-spacing:0.57px;">0</div>
<div class="t" style="left:598.4px;top:389px;font-size:9.7px;color:#3c3c3c;text-rendering:geometricPrecision;-webkit-text-stroke:0.12px;letter-spacing:0.57px;">0</div>
<div class="t" style="left:673.3px;top:389px;font-size:9.7px;color:#3c3c3c;text-rendering:geometricPrecision;-webkit-text-stroke:0.12px;letter-spacing:0.57px;">0</div>
<div class="t" style="left:756.9px;top:389px;font-size:9.7px;color:#3c3c3c;text-rendering:geometricPrecision;-webkit-text-stroke:0.12px;letter-spacing:0.57px;">0</div>
<div class="t" style="left:831.8px;top:389px;font-size:9.7px;color:#3c3c3c;text-rendering:geometricPrecision;-webkit-text-stroke:0.12px;letter-spacing:0.57px;">0</div>
<div class="t" style="left:933.8px;top:389px;font-size:9.7px;color:#3c3c3c;text-rendering:geometricPrecision;-webkit-text-stroke:0.12px;letter-spacing:0.57px;">0</div>
<div class="t" style="left:1026.9px;top:389px;font-size:9.7px;color:#3c3c3c;text-rendering:geometricPrecision;-webkit-text-stroke:0.12px;letter-spacing:0.57px;">0</div>
<div class="t" style="left:385.2px;top:403px;font-size:9.7px;color:#3c3c3c;text-rendering:geometricPrecision;-webkit-text-stroke:0.12px;letter-spacing:0.57px;">2,915,877</div>
<div class="t" style="left:473.3px;top:403px;font-size:9.7px;color:#3c3c3c;text-rendering:geometricPrecision;-webkit-text-stroke:0.12px;letter-spacing:0.57px;">2,915,877</div>
<div class="t" style="left:556.1px;top:403px;font-size:9.7px;color:#3c3c3c;text-rendering:geometricPrecision;-webkit-text-stroke:0.12px;letter-spacing:0.57px;">2,415,877</div>
<div class="t" style="left:631.0px;top:403px;font-size:9.7px;color:#3c3c3c;text-rendering:geometricPrecision;-webkit-text-stroke:0.12px;letter-spacing:0.57px;">2,415,877</div>
<div class="t" style="left:756.9px;top:403px;font-size:9.7px;color:#3c3c3c;text-rendering:geometricPrecision;-webkit-text-stroke:0.12px;letter-spacing:0.57px;">0</div>
<div class="t" style="left:831.8px;top:403px;font-size:9.7px;color:#3c3c3c;text-rendering:geometricPrecision;-webkit-text-stroke:0.12px;letter-spacing:0.57px;">0</div>
<div class="t" style="left:900.7px;top:403px;font-size:9.7px;color:#3c3c3c;text-rendering:geometricPrecision;-webkit-text-stroke:0.12px;letter-spacing:0.57px;">500,000</div>
<div class="t" style="left:993.8px;top:403px;font-size:9.7px;color:#3c3c3c;text-rendering:geometricPrecision;-webkit-text-stroke:0.12px;letter-spacing:0.57px;">500,000</div>
<div class="t" style="left:427.5px;top:417px;font-size:9.7px;color:#3c3c3c;text-rendering:geometricPrecision;-webkit-text-stroke:0.12px;letter-spacing:0.57px;">0</div>
<div class="t" style="left:515.6px;top:417px;font-size:9.7px;color:#3c3c3c;text-rendering:geometricPrecision;-webkit-text-stroke:0.12px;letter-spacing:0.57px;">0</div>
<div class="t" style="left:598.4px;top:417px;font-size:9.7px;color:#3c3c3c;text-rendering:geometricPrecision;-webkit-text-stroke:0.12px;letter-spacing:0.57px;">0</div>
<div class="t" style="left:673.3px;top:417px;font-size:9.7px;color:#3c3c3c;text-rendering:geometricPrecision;-webkit-text-stroke:0.12px;letter-spacing:0.57px;">0</div>
<div class="t" style="left:756.9px;top:417px;font-size:9.7px;color:#3c3c3c;text-rendering:geometricPrecision;-webkit-text-stroke:0.12px;letter-spacing:0.57px;">0</div>
<div class="t" style="left:831.8px;top:417px;font-size:9.7px;color:#3c3c3c;text-rendering:geometricPrecision;-webkit-text-stroke:0.12px;letter-spacing:0.57px;">0</div>
<div class="t" style="left:933.8px;top:417px;font-size:9.7px;color:#3c3c3c;text-rendering:geometricPrecision;-webkit-text-stroke:0.12px;letter-spacing:0.57px;">0</div>
<div class="t" style="left:1026.9px;top:417px;font-size:9.7px;color:#3c3c3c;text-rendering:geometricPrecision;-webkit-text-stroke:0.12px;letter-spacing:0.57px;">0</div>
<div class="t" style="left:379.3px;top:431px;font-size:9.7px;color:#3e3e42;text-rendering:geometricPrecision;font-weight:700;letter-spacing:0.57px;">14,833,821</div>
<div class="t" style="left:467.4px;top:431px;font-size:9.7px;color:#3e3e42;text-rendering:geometricPrecision;font-weight:700;letter-spacing:0.57px;">14,833,821</div>
<div class="t" style="left:550.2px;top:431px;font-size:9.7px;color:#3e3e42;text-rendering:geometricPrecision;font-weight:700;letter-spacing:0.57px;">14,333,821</div>
<div class="t" style="left:625.1px;top:431px;font-size:9.7px;color:#3e3e42;text-rendering:geometricPrecision;font-weight:700;letter-spacing:0.57px;">14,333,821</div>
<div class="t" style="left:756.9px;top:431px;font-size:9.7px;color:#3e3e42;text-rendering:geometricPrecision;font-weight:700;letter-spacing:0.57px;">0</div>
<div class="t" style="left:831.8px;top:431px;font-size:9.7px;color:#3e3e42;text-rendering:geometricPrecision;font-weight:700;letter-spacing:0.57px;">0</div>
<div class="t" style="left:900.7px;top:431px;font-size:9.7px;color:#3e3e42;text-rendering:geometricPrecision;font-weight:700;letter-spacing:0.57px;">500,000</div>
<div class="t" style="left:993.8px;top:431px;font-size:9.7px;color:#3e3e42;text-rendering:geometricPrecision;font-weight:700;letter-spacing:0.57px;">500,000</div>
<div class="t" style="left:427.5px;top:473px;font-size:9.7px;color:#3c3c3c;text-rendering:geometricPrecision;-webkit-text-stroke:0.12px;letter-spacing:0.57px;">0</div>
<div class="t" style="left:515.6px;top:473px;font-size:9.7px;color:#3c3c3c;text-rendering:geometricPrecision;-webkit-text-stroke:0.12px;letter-spacing:0.57px;">0</div>
<div class="t" style="left:598.4px;top:473px;font-size:9.7px;color:#3c3c3c;text-rendering:geometricPrecision;-webkit-text-stroke:0.12px;letter-spacing:0.57px;">0</div>
<div class="t" style="left:673.3px;top:473px;font-size:9.7px;color:#3c3c3c;text-rendering:geometricPrecision;-webkit-text-stroke:0.12px;letter-spacing:0.57px;">0</div>
<div class="t" style="left:756.9px;top:473px;font-size:9.7px;color:#3c3c3c;text-rendering:geometricPrecision;-webkit-text-stroke:0.12px;letter-spacing:0.57px;">0</div>
<div class="t" style="left:831.8px;top:473px;font-size:9.7px;color:#3c3c3c;text-rendering:geometricPrecision;-webkit-text-stroke:0.12px;letter-spacing:0.57px;">0</div>
<div class="t" style="left:933.8px;top:473px;font-size:9.7px;color:#3c3c3c;text-rendering:geometricPrecision;-webkit-text-stroke:0.12px;letter-spacing:0.57px;">0</div>
<div class="t" style="left:1026.9px;top:473px;font-size:9.7px;color:#3c3c3c;text-rendering:geometricPrecision;-webkit-text-stroke:0.12px;letter-spacing:0.57px;">0</div>
<div class="t" style="left:379.3px;top:487px;font-size:9.7px;color:#3c3c3c;text-rendering:geometricPrecision;-webkit-text-stroke:0.12px;letter-spacing:0.57px;">68,031,506</div>
<div class="t" style="left:467.4px;top:487px;font-size:9.7px;color:#3c3c3c;text-rendering:geometricPrecision;-webkit-text-stroke:0.12px;letter-spacing:0.57px;">41,096,784</div>
<div class="t" style="left:556.1px;top:487px;font-size:9.7px;color:#3c3c3c;text-rendering:geometricPrecision;-webkit-text-stroke:0.12px;letter-spacing:0.57px;">4,350,984</div>
<div class="t" style="left:631.0px;top:487px;font-size:9.7px;color:#3c3c3c;text-rendering:geometricPrecision;-webkit-text-stroke:0.12px;letter-spacing:0.57px;">3,575,587</div>
<div class="t" style="left:714.6px;top:487px;font-size:9.7px;color:#3c3c3c;text-rendering:geometricPrecision;-webkit-text-stroke:0.12px;letter-spacing:0.57px;">1,133,959</div>
<div class="t" style="left:831.8px;top:487px;font-size:9.7px;color:#3c3c3c;text-rendering:geometricPrecision;-webkit-text-stroke:0.12px;letter-spacing:0.57px;">0</div>
<div class="t" style="left:885.6px;top:487px;font-size:9.7px;color:#3c3c3c;text-rendering:geometricPrecision;-webkit-text-stroke:0.12px;letter-spacing:0.57px;">62,546,563</div>
<div class="t" style="left:978.7px;top:487px;font-size:9.7px;color:#3c3c3c;text-rendering:geometricPrecision;-webkit-text-stroke:0.12px;letter-spacing:0.57px;">37,521,197</div>
<div class="t" style="left:385.9px;top:501px;font-size:9.7px;color:#3c3c3c;text-rendering:geometricPrecision;-webkit-text-stroke:0.12px;letter-spacing:0.57px;">4,116,467</div>
<div class="t" style="left:473.3px;top:501px;font-size:9.7px;color:#3c3c3c;text-rendering:geometricPrecision;-webkit-text-stroke:0.12px;letter-spacing:0.57px;">2,014,675</div>
<div class="t" style="left:565.3px;top:501px;font-size:9.7px;color:#3c3c3c;text-rendering:geometricPrecision;-webkit-text-stroke:0.12px;letter-spacing:0.57px;">959,223</div>
<div class="t" style="left:640.2px;top:501px;font-size:9.7px;color:#3c3c3c;text-rendering:geometricPrecision;-webkit-text-stroke:0.12px;letter-spacing:0.57px;">858,626</div>
<div class="t" style="left:723.8px;top:501px;font-size:9.7px;color:#3c3c3c;text-rendering:geometricPrecision;-webkit-text-stroke:0.12px;letter-spacing:0.57px;">663,365</div>
<div class="t" style="left:831.8px;top:501px;font-size:9.7px;color:#3c3c3c;text-rendering:geometricPrecision;-webkit-text-stroke:0.12px;letter-spacing:0.57px;">0</div>
<div class="t" style="left:891.5px;top:501px;font-size:9.7px;color:#3c3c3c;text-rendering:geometricPrecision;-webkit-text-stroke:0.12px;letter-spacing:0.57px;">2,493,879</div>
<div class="t" style="left:984.6px;top:501px;font-size:9.7px;color:#3c3c3c;text-rendering:geometricPrecision;-webkit-text-stroke:0.12px;letter-spacing:0.57px;">1,156,049</div>
<div class="t" style="left:385.2px;top:515px;font-size:9.7px;color:#3c3c3c;text-rendering:geometricPrecision;-webkit-text-stroke:0.12px;letter-spacing:0.57px;">9,878,480</div>
<div class="t" style="left:473.3px;top:515px;font-size:9.7px;color:#3c3c3c;text-rendering:geometricPrecision;-webkit-text-stroke:0.12px;letter-spacing:0.57px;">9,878,480</div>
<div class="t" style="left:556.1px;top:515px;font-size:9.7px;color:#3c3c3c;text-rendering:geometricPrecision;-webkit-text-stroke:0.12px;letter-spacing:0.57px;">9,628,480</div>
<div class="t" style="left:631.0px;top:515px;font-size:9.7px;color:#3c3c3c;text-rendering:geometricPrecision;-webkit-text-stroke:0.12px;letter-spacing:0.57px;">9,628,480</div>
<div class="t" style="left:756.9px;top:515px;font-size:9.7px;color:#3c3c3c;text-rendering:geometricPrecision;-webkit-text-stroke:0.12px;letter-spacing:0.57px;">0</div>
<div class="t" style="left:831.8px;top:515px;font-size:9.7px;color:#3c3c3c;text-rendering:geometricPrecision;-webkit-text-stroke:0.12px;letter-spacing:0.57px;">0</div>
<div class="t" style="left:900.7px;top:515px;font-size:9.7px;color:#3c3c3c;text-rendering:geometricPrecision;-webkit-text-stroke:0.12px;letter-spacing:0.57px;">250,000</div>
<div class="t" style="left:993.8px;top:515px;font-size:9.7px;color:#3c3c3c;text-rendering:geometricPrecision;-webkit-text-stroke:0.12px;letter-spacing:0.57px;">250,000</div>
<div class="t" style="left:390.6px;top:529px;font-size:9.7px;color:#3c3c3c;text-rendering:geometricPrecision;-webkit-text-stroke:0.12px;letter-spacing:0.57px;">-105,600</div>
<div class="t" style="left:515.6px;top:529px;font-size:9.7px;color:#3c3c3c;text-rendering:geometricPrecision;-webkit-text-stroke:0.12px;letter-spacing:0.57px;">0</div>
<div class="t" style="left:598.4px;top:529px;font-size:9.7px;color:#3c3c3c;text-rendering:geometricPrecision;-webkit-text-stroke:0.12px;letter-spacing:0.57px;">0</div>
<div class="t" style="left:673.3px;top:529px;font-size:9.7px;color:#3c3c3c;text-rendering:geometricPrecision;-webkit-text-stroke:0.12px;letter-spacing:0.57px;">0</div>
<div class="t" style="left:720.0px;top:529px;font-size:9.7px;color:#3c3c3c;text-rendering:geometricPrecision;-webkit-text-stroke:0.12px;letter-spacing:0.57px;">-105,600</div>
<div class="t" style="left:831.8px;top:529px;font-size:9.7px;color:#3c3c3c;text-rendering:geometricPrecision;-webkit-text-stroke:0.12px;letter-spacing:0.57px;">0</div>
<div class="t" style="left:933.8px;top:529px;font-size:9.7px;color:#3c3c3c;text-rendering:geometricPrecision;-webkit-text-stroke:0.12px;letter-spacing:0.57px;">0</div>
<div class="t" style="left:1026.9px;top:529px;font-size:9.7px;color:#3c3c3c;text-rendering:geometricPrecision;-webkit-text-stroke:0.12px;letter-spacing:0.57px;">0</div>
<div class="t" style="left:379.3px;top:543px;font-size:9.7px;color:#3e3e42;text-rendering:geometricPrecision;font-weight:700;letter-spacing:0.57px;">81,920,852</div>
<div class="t" style="left:467.4px;top:543px;font-size:9.7px;color:#3e3e42;text-rendering:geometricPrecision;font-weight:700;letter-spacing:0.57px;">52,989,939</div>
<div class="t" style="left:550.2px;top:543px;font-size:9.7px;color:#3e3e42;text-rendering:geometricPrecision;font-weight:700;letter-spacing:0.57px;">14,938,686</div>
<div class="t" style="left:625.1px;top:543px;font-size:9.7px;color:#3e3e42;text-rendering:geometricPrecision;font-weight:700;letter-spacing:0.57px;">14,062,693</div>
<div class="t" style="left:714.6px;top:543px;font-size:9.7px;color:#3e3e42;text-rendering:geometricPrecision;font-weight:700;letter-spacing:0.57px;">1,691,724</div>
<div class="t" style="left:831.8px;top:543px;font-size:9.7px;color:#3e3e42;text-rendering:geometricPrecision;font-weight:700;letter-spacing:0.57px;">0</div>
<div class="t" style="left:885.6px;top:543px;font-size:9.7px;color:#3e3e42;text-rendering:geometricPrecision;font-weight:700;letter-spacing:0.57px;">65,290,442</div>
<div class="t" style="left:978.7px;top:543px;font-size:9.7px;color:#3e3e42;text-rendering:geometricPrecision;font-weight:700;letter-spacing:0.57px;">38,927,246</div>
<div class="t" style="left:379.3px;top:570px;font-size:9.7px;color:#1c1410;text-rendering:geometricPrecision;font-weight:700;letter-spacing:0.57px;">94,137,330</div>
<div class="t" style="left:467.4px;top:570px;font-size:9.7px;color:#1c1410;text-rendering:geometricPrecision;font-weight:700;letter-spacing:0.57px;">54,503,655</div>
<div class="t" style="left:550.7px;top:570px;font-size:9.7px;color:#1c1410;text-rendering:geometricPrecision;font-weight:700;letter-spacing:0.57px;">38,470,011</div>
<div class="t" style="left:625.1px;top:570px;font-size:9.7px;color:#1c1410;text-rendering:geometricPrecision;font-weight:700;letter-spacing:0.57px;">36,803,010</div>
<div class="t" style="left:714.6px;top:570px;font-size:9.7px;color:#1c1410;text-rendering:geometricPrecision;font-weight:700;letter-spacing:0.57px;">5,724,719</div>
<div class="t" style="left:789.5px;top:570px;font-size:9.7px;color:#1c1410;text-rendering:geometricPrecision;font-weight:700;letter-spacing:0.57px;">3,000,000</div>
<div class="t" style="left:885.6px;top:570px;font-size:9.7px;color:#1c1410;text-rendering:geometricPrecision;font-weight:700;letter-spacing:0.57px;">77,066,581</div>
<div class="t" style="left:978.7px;top:570px;font-size:9.7px;color:#1c1410;text-rendering:geometricPrecision;font-weight:700;letter-spacing:0.57px;">41,824,626</div>
<div class="t" style="left:379.3px;top:627px;font-size:9.7px;color:#3e3e42;text-rendering:geometricPrecision;font-weight:700;letter-spacing:0.57px;">10,900,664</div>
<div class="t" style="left:467.4px;top:627px;font-size:9.7px;color:#3e3e42;text-rendering:geometricPrecision;font-weight:700;letter-spacing:0.57px;">10,020,664</div>
<div class="t" style="left:556.1px;top:627px;font-size:9.7px;color:#3e3e42;text-rendering:geometricPrecision;font-weight:700;letter-spacing:0.57px;">8,620,664</div>
<div class="t" style="left:631.0px;top:627px;font-size:9.7px;color:#3e3e42;text-rendering:geometricPrecision;font-weight:700;letter-spacing:0.57px;">8,620,664</div>
<div class="t" style="left:723.8px;top:627px;font-size:9.7px;color:#3e3e42;text-rendering:geometricPrecision;font-weight:700;letter-spacing:0.57px;">880,000</div>
<div class="t" style="left:831.8px;top:627px;font-size:9.7px;color:#3e3e42;text-rendering:geometricPrecision;font-weight:700;letter-spacing:0.57px;">0</div>
<div class="t" style="left:891.5px;top:627px;font-size:9.7px;color:#3e3e42;text-rendering:geometricPrecision;font-weight:700;letter-spacing:0.57px;">1,400,000</div>
<div class="t" style="left:984.6px;top:627px;font-size:9.7px;color:#3e3e42;text-rendering:geometricPrecision;font-weight:700;letter-spacing:0.57px;">1,400,000</div>
<div class="t" style="left:379.3px;top:641px;font-size:9.7px;color:#3c3c3c;text-rendering:geometricPrecision;-webkit-text-stroke:0.12px;letter-spacing:0.57px;">10,900,664</div>
<div class="t" style="left:467.4px;top:641px;font-size:9.7px;color:#3c3c3c;text-rendering:geometricPrecision;-webkit-text-stroke:0.12px;letter-spacing:0.57px;">10,020,664</div>
<div class="t" style="left:556.1px;top:641px;font-size:9.7px;color:#3c3c3c;text-rendering:geometricPrecision;-webkit-text-stroke:0.12px;letter-spacing:0.57px;">8,620,664</div>
<div class="t" style="left:631.0px;top:641px;font-size:9.7px;color:#3c3c3c;text-rendering:geometricPrecision;-webkit-text-stroke:0.12px;letter-spacing:0.57px;">8,620,664</div>
<div class="t" style="left:723.8px;top:641px;font-size:9.7px;color:#3c3c3c;text-rendering:geometricPrecision;-webkit-text-stroke:0.12px;letter-spacing:0.57px;">880,000</div>
<div class="t" style="left:831.8px;top:641px;font-size:9.7px;color:#3c3c3c;text-rendering:geometricPrecision;-webkit-text-stroke:0.12px;letter-spacing:0.57px;">0</div>
<div class="t" style="left:891.5px;top:641px;font-size:9.7px;color:#3c3c3c;text-rendering:geometricPrecision;-webkit-text-stroke:0.12px;letter-spacing:0.57px;">1,400,000</div>
<div class="t" style="left:984.6px;top:641px;font-size:9.7px;color:#3c3c3c;text-rendering:geometricPrecision;-webkit-text-stroke:0.12px;letter-spacing:0.57px;">1,400,000</div>
</body></html>
